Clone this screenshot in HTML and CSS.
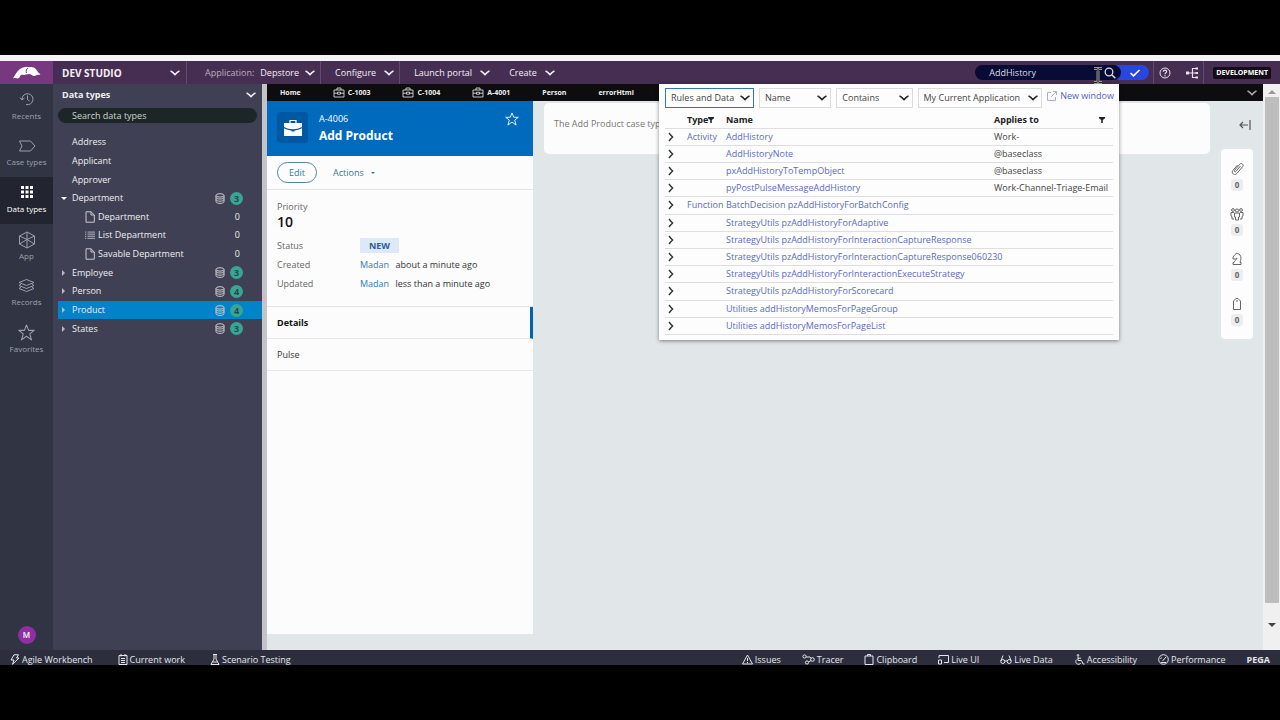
FILE: index.html
```html
<!DOCTYPE html>
<html lang="en">
<head>
    <meta charset="UTF-8">
    <meta name="viewport" content="width=device-width, initial-scale=1.0">
    <title>Dev Studio - Add Product</title>
    <link rel="stylesheet" href="styles.css">
</head>
<body>
    <!-- shared icons -->
    <svg class="sprite" aria-hidden="true">
        <symbol id="chevron" viewBox="0 0 10 6"><path d="M1 1.2Q3 2.6 5 4.6Q7 2.6 9 1.2" fill="none" stroke="currentColor" stroke-width="1.5" stroke-linecap="round"/></symbol>
        <symbol id="expand" viewBox="0 0 6 10"><path d="M1 1Q2.5 3 4.6 5Q2.5 7 1 9" fill="none" stroke="currentColor" stroke-width="1.4"/></symbol>
        <symbol id="case" viewBox="0 0 12 11"><path d="M1 3h10v7H1zM4 3V1h4v2M1 6.2h3.5M7.5 6.2H11M4.5 5.2h3v2h-3z" fill="none" stroke="currentColor" stroke-width=".8"/></symbol>
        <symbol id="db" viewBox="0 0 10 11"><path d="M1 2.4v6.2C1 9.6 2.6 10.4 5 10.4S9 9.6 9 8.6V2.4M1 4.4C1 5.4 2.6 6 5 6s4-.6 4-1.6M1 6.5C1 7.5 2.6 8.2 5 8.2s4-.7 4-1.7" fill="none" stroke="currentColor"/><ellipse cx="5" cy="2.4" rx="4" ry="1.7" fill="none" stroke="currentColor"/></symbol>
        <symbol id="doc" viewBox="0 0 10 12"><path d="M1 .8h5L9.3 4v7.2H1zM6 .8V4h3.3" fill="none" stroke="currentColor"/></symbol>
        <symbol id="list" viewBox="0 0 12 10"><path d="M0 1.5h1.5M3 1.5h9M0 4h1.5M3 4h9M0 6.5h1.5M3 6.5h9M0 9h1.5M3 9h9" stroke="currentColor"/></symbol>
        <symbol id="star" viewBox="0 0 16 16"><path d="M8 1l2 5h5.2l-4.1 3.3L12.7 15 8 11.5 3.3 15l1.6-5.7L.8 6H6z" fill="none" stroke="currentColor" stroke-linejoin="round"/></symbol>
        <symbol id="filter" viewBox="0 0 6 6"><path d="M0 0h6v1.2L3.8 3v3H2.2V3L0 1.2z" fill="currentColor"/></symbol>
    </svg>

    <div class="screen">
        <header class="topbar">
            <a class="logo" href="#" aria-label="Pega">
                <svg width="28" height="13" viewBox="0 0 28 13"><path d="M0 12.5C2 9 5 3 10 1.5c3-1 5-.8 6.5-.2 2-.9 5 0 6.5 2 1.5 2 2.5 4 4.5 5-1.5 1-3 .2-4.2 1-1.5 1-3.3.8-4.5-.3-1.8-1.500-4-1-5.800-.4-2.500.8-3.500-.3-5 .5C6.500 10 7 12 5.500 12.300 4 12.700 3 11.500 0 12.500z" fill="#fff"/><path d="M15 2c-2 1.200-2 3-1.500 5" fill="none" stroke="#77387f"/></svg>
            </a>
            <button class="studio">DEV STUDIO <svg class="chev"><use href="#chevron"/></svg></button>
            <nav class="menus">
                <button class="menu app"><span class="dim">Application:</span> Depstore <svg class="chev"><use href="#chevron"/></svg></button>
                <button class="menu configure">Configure <svg class="chev"><use href="#chevron"/></svg></button>
                <button class="menu">Launch portal <svg class="chev"><use href="#chevron"/></svg></button>
                <button class="menu">Create <svg class="chev"><use href="#chevron"/></svg></button>
            </nav>
            <div class="tools">
                <div class="search">
                    <input type="text" value="AddHistory" aria-label="Search rules">
                    <button class="search-btn" aria-label="Search"><svg width="12" height="12" viewBox="0 0 12 12"><circle cx="5" cy="5" r="3.8" fill="none" stroke="#ddd" stroke-width="1.3"/><path d="M8 8l3.3 3.3" stroke="#ddd" stroke-width="1.5"/></svg></button>
                </div>
                <button class="confirm" aria-label="Check"><svg width="12" height="8" viewBox="0 0 12 8"><path d="M1.5 4l3 2.8L10.5 1" fill="none" stroke="#fff" stroke-width="1.6"/></svg></button>
                <button class="tool" aria-label="Help"><svg width="12" height="12" viewBox="0 0 12 12" fill="none" stroke="#e8e0ea"><circle cx="6" cy="6" r="5"/><path d="M4.3 4.8C4.3 2.6 7.7 2.7 7.6 4.7 7.5 5.8 6 5.7 6 7.2M6 8.2v1.2" stroke-width="1.2"/></svg></button>
                <button class="tool tree" aria-label="Live structure"><svg width="12" height="12" viewBox="0 0 12 12" fill="none" stroke="#e8e0ea" stroke-width="1.2"><path d="M3 6h8M10 1.5H6.5v9H10"/><path d="M0 4.5h3v3H0zM9.5.5H12v2H9.5zM9.5 5H12v2H9.5zM9.5 9.5H12v2H9.5z" fill="#e8e0ea" stroke="none"/></svg></button>
                <span class="env">DEVELOPMENT</span>
            </div>
            <svg class="cursor" width="10" height="17" viewBox="0 0 10 17"><path d="M1 1.5h3l1 1 1-1h3M5 2.5v12M1 15.5h3l1-1 1 1h3" fill="none" stroke="#999" stroke-width="3"/><path d="M1 1.5h3l1 1 1-1h3M5 2.5v12M1 15.5h3l1-1 1 1h3" fill="none" stroke="#222"/></svg>

            <section class="results">
                <div class="filters">
                    <span class="pick rules focus"><select aria-label="Scope"><option>Rules and Data</option></select><svg class="chev"><use href="#chevron"/></svg></span>
                    <span class="pick name"><select aria-label="Field"><option>Name</option></select><svg class="chev"><use href="#chevron"/></svg></span>
                    <span class="pick match"><select aria-label="Match"><option>Contains</option></select><svg class="chev"><use href="#chevron"/></svg></span>
                    <span class="pick stack"><select aria-label="Application"><option>My Current Application</option></select><svg class="chev"><use href="#chevron"/></svg></span>
                    <a class="newwin" href="#"><svg width="10" height="10" viewBox="0 0 10 10" fill="none" stroke="#a9b0d8"><path d="M4 1.5H.5v8h8V6M6 .5h3.5V4M9.5.5L4 6"/></svg>New window</a>
                </div>
                <table>
                    <colgroup><col class="c-exp"><col class="c-type"><col class="c-name"><col></colgroup>
                    <thead>
                        <tr><th></th><th>Type<svg class="flt"><use href="#filter"/></svg></th><th>Name</th><th class="applies">Applies to <svg class="flt"><use href="#filter"/></svg></th></tr>
                    </thead>
                    <tbody>
                        <tr><td><svg class="exp"><use href="#expand"/></svg></td><td><a href="#">Activity</a></td><td><a href="#">AddHistory</a></td><td>Work-</td></tr>
                        <tr><td><svg class="exp"><use href="#expand"/></svg></td><td></td><td><a href="#">AddHistoryNote</a></td><td>@baseclass</td></tr>
                        <tr><td><svg class="exp"><use href="#expand"/></svg></td><td></td><td><a href="#">pxAddHistoryToTempObject</a></td><td>@baseclass</td></tr>
                        <tr><td><svg class="exp"><use href="#expand"/></svg></td><td></td><td><a href="#">pyPostPulseMessageAddHistory</a></td><td>Work-Channel-Triage-Email</td></tr>
                        <tr><td><svg class="exp"><use href="#expand"/></svg></td><td><a href="#">Function</a></td><td><a href="#">BatchDecision pzAddHistoryForBatchConfig</a></td><td></td></tr>
                        <tr><td><svg class="exp"><use href="#expand"/></svg></td><td></td><td><a href="#">StrategyUtils pzAddHistoryForAdaptive</a></td><td></td></tr>
                        <tr><td><svg class="exp"><use href="#expand"/></svg></td><td></td><td><a href="#">StrategyUtils pzAddHistoryForInteractionCaptureResponse</a></td><td></td></tr>
                        <tr><td><svg class="exp"><use href="#expand"/></svg></td><td></td><td><a href="#">StrategyUtils pzAddHistoryForInteractionCaptureResponse060230</a></td><td></td></tr>
                        <tr><td><svg class="exp"><use href="#expand"/></svg></td><td></td><td><a href="#">StrategyUtils pzAddHistoryForInteractionExecuteStrategy</a></td><td></td></tr>
                        <tr><td><svg class="exp"><use href="#expand"/></svg></td><td></td><td><a href="#">StrategyUtils pzAddHistoryForScorecard</a></td><td></td></tr>
                        <tr><td><svg class="exp"><use href="#expand"/></svg></td><td></td><td><a href="#">Utilities addHistoryMemosForPageGroup</a></td><td></td></tr>
                        <tr><td><svg class="exp"><use href="#expand"/></svg></td><td></td><td><a href="#">Utilities addHistoryMemosForPageList</a></td><td></td></tr>
                    </tbody>
                </table>
            </section>
        </header>

        <div class="body">
            <nav class="rail">
                <div class="rail-items">
                    <a href="#"><svg width="16" height="16" viewBox="0 0 16 16" fill="none" stroke="currentColor"><path d="M3 8a5.5 5.5 0 1 1 4 5.5M1 6.5L3 9l2.5-2M8.5 4.5v4l2 1.5"/></svg>Recents</a>
                    <a href="#"><svg width="18" height="16" viewBox="0 0 18 16" fill="none" stroke="currentColor"><path d="M1.5 3h11L17 8l-4.5 5h-11L4 8z"/></svg>Case types</a>
                    <a class="on" href="#"><svg width="16" height="16" viewBox="0 0 16 16" fill="currentColor"><path d="M2 2h3v3H2zM6.5 2h3v3h-3zM11 2h3v3h-3zM2 6.5h3v3H2zM6.5 6.5h3v3h-3zM11 6.5h3v3h-3zM2 11h3v3H2zM6.5 11h3v3h-3zM11 11h3v3h-3z"/></svg>Data types</a>
                    <a href="#"><svg width="18" height="18" viewBox="0 0 18 18" fill="none" stroke="currentColor"><path d="M9 1l7.5 4v8L9 17l-7.5-4V5zM9 1v7.5M1.5 5L9 8.5 16.5 5M9 8.5L1.5 13M9 8.5l7.5 4.5M9 8.5V17"/></svg>App</a>
                    <a href="#"><svg width="17" height="15" viewBox="0 0 17 15" fill="none" stroke="currentColor"><path d="M8.5 1.5L16 4.5l-7.5 3L1 4.5zM3 6L1 7.5l7.5 3 7.5-3L14 6M3 9l-2 1.5 7.5 3 7.5-3L14 9"/></svg>Records</a>
                    <a href="#"><svg width="17" height="17"><use href="#star"/></svg>Favorites</a>
                </div>
                <span class="avatar">M</span>
            </nav>

            <aside class="explorer">
                <h2>Data types <svg class="chev"><use href="#chevron"/></svg></h2>
                <input class="find" type="text" placeholder="Search data types" aria-label="Search data types">
                <ul>
                    <li><a href="#">Address</a></li>
                    <li><a href="#">Applicant</a></li>
                    <li><a href="#">Approver</a></li>
                    <li><i class="tri open"></i><a href="#">Department</a><svg class="db"><use href="#db"/></svg><b>3</b></li>
                    <li class="sub"><svg class="doc"><use href="#doc"/></svg><a href="#">Department</a><em>0</em></li>
                    <li class="sub"><svg class="doc"><use href="#list"/></svg><a href="#">List Department</a><em>0</em></li>
                    <li class="sub"><svg class="doc"><use href="#doc"/></svg><a href="#">Savable Department</a><em>0</em></li>
                    <li><i class="tri"></i><a href="#">Employee</a><svg class="db"><use href="#db"/></svg><b>3</b></li>
                    <li><i class="tri"></i><a href="#">Person</a><svg class="db"><use href="#db"/></svg><b>4</b></li>
                    <li class="on"><i class="tri"></i><a href="#">Product</a><svg class="db"><use href="#db"/></svg><b>4</b></li>
                    <li><i class="tri"></i><a href="#">States</a><svg class="db"><use href="#db"/></svg><b>3</b></li>
                </ul>
            </aside>

            <div class="splitter"></div>

            <div class="work">
                <nav class="tabs">
                    <a href="#">Home</a>
                    <a href="#"><svg width="12" height="11"><use href="#case"/></svg>C-1003</a>
                    <a href="#"><svg width="12" height="11"><use href="#case"/></svg>C-1004</a>
                    <a href="#"><svg width="12" height="11"><use href="#case"/></svg>A-4001</a>
                    <a href="#">Person</a>
                    <a href="#">errorHtml</a>
                    <svg class="chev more"><use href="#chevron"/></svg>
                </nav>
                <div class="content">
                    <section class="case">
                        <div class="case-head">
                            <span class="case-icon"><svg width="18" height="17" viewBox="0 0 18 17"><path d="M6 4V1.5h6V4" fill="none" stroke="#fff" stroke-width="1.2"/><path d="M0 4h18v4c-6 3-12 3-18 0zM0 9.2c3 1.5 5 2 7.5 2.2v1h3v-1c2.5-.2 4.5-.7 7.5-2.2V17H0z" fill="#fff"/></svg></span>
                            <div class="case-title">
                                <span>A-4006</span>
                                <h1>Add Product</h1>
                            </div>
                            <svg class="fav" width="14" height="14"><use href="#star"/></svg>
                        </div>
                        <div class="case-actions">
                            <button class="edit">Edit</button>
                            <button class="actions">Actions <i></i></button>
                        </div>
                        <div class="case-info">
                            <div class="label">Priority</div>
                            <div class="priority">10</div>
                            <dl>
                                <dt>Status</dt><dd><span class="badge">NEW</span></dd>
                                <dt>Created</dt><dd><a href="#">Madan</a> about a minute ago</dd>
                                <dt>Updated</dt><dd><a href="#">Madan</a> less than a minute ago</dd>
                            </dl>
                        </div>
                        <a class="case-tab on" href="#">Details</a>
                        <a class="case-tab" href="#">Pulse</a>
                    </section>
                    <main class="main">
                        <div class="card">The Add Product case type</div>
                    </main>
                    <aside class="utils">
                        <svg class="collapse" width="12" height="12" viewBox="0 0 12 12" fill="none" stroke="#555" stroke-width="1.2"><path d="M11 1v10M9 6H1M4 3L1 6l3 3"/></svg>
                        <div class="util-card">
                            <a href="#"><svg width="13" height="14" viewBox="0 0 13 14" fill="none" stroke="currentColor"><path d="M9.5 4L4.8 9.5c-.8 1-2-.2-1.2-1.2L8.8 2.2c1.6-1.8 4.4.5 2.9 2.4L5.8 11.5c-2.4 2.6-6-.4-3.9-3L6.5 3"/></svg><b>0</b></a>
                            <a href="#"><svg width="14" height="14" viewBox="0 0 14 14" fill="none" stroke="currentColor"><circle cx="3" cy="3" r="1.4"/><circle cx="11" cy="3" r="1.4"/><circle cx="7" cy="3.5" r="1.6"/><path d="M4.5 6h5v4H8.5v3h-3v-3h-1zM3.8 5.5H1v3.5l1 .5V12h2M10.2 5.5H13v3.5l-1 .5V12h-2"/></svg><b>0</b></a>
                            <a href="#"><svg width="12" height="14" viewBox="0 0 12 14" fill="none" stroke="currentColor"><path d="M2 12.5h8v-2H9C10 8 10.5 5 9 3 7.5 1.2 5 1 4 2.5L2 5v2h2.5L6 6c0 2-3 2.5-3 4.5H2z"/></svg><b>0</b></a>
                            <a href="#"><svg width="10" height="14" viewBox="0 0 10 14" fill="none" stroke="currentColor"><path d="M1.5 4L4 1.5h2L8.5 4v8.5h-7zM4 4h2"/></svg><b>0</b></a>
                        </div>
                    </aside>
                    <div class="scroll"><i class="up"></i><span></span><i class="down"></i></div>
                </div>
            </div>
        </div>

        <footer class="devbar">
            <div class="left">
                <a href="#"><svg width="10" height="11" viewBox="0 0 10 11" fill="none" stroke="currentColor"><path d="M4 .8h4.5L6.5 4H9L2.5 10.3 4 6H1z"/></svg>Agile Workbench</a>
                <a href="#"><svg width="10" height="11" viewBox="0 0 10 11" fill="none" stroke="currentColor"><path d="M1 1.5h8v9H1zM3 0v2.5M7 0v2.5M3 4.5h4M3 6.5h4M3 8.5h4"/></svg>Current work</a>
                <a href="#"><svg width="10" height="11" viewBox="0 0 10 11" fill="none" stroke="currentColor"><path d="M3 .5h4M4 .5V5L1 10.5h8L6 5V.5M2.5 8h5"/></svg>Scenario Testing</a>
            </div>
            <div class="right">
                <a href="#"><svg width="11" height="11" viewBox="0 0 11 11" fill="none" stroke="currentColor"><path d="M5.5 1L10.5 10H.5zM5.5 4v3M5.5 8v1.2"/></svg>Issues</a>
                <a href="#"><svg width="13" height="11" viewBox="0 0 13 11" fill="none" stroke="currentColor"><circle cx="2.5" cy="2.5" r="1.6"/><circle cx="5" cy="8.5" r="1.6"/><circle cx="10.5" cy="5.5" r="1.8"/><path d="M4 3h4l1 1.5M6.5 8L9 6.5"/></svg>Tracer</a>
                <a href="#"><svg width="10" height="11" viewBox="0 0 10 11" fill="none" stroke="currentColor"><path d="M1 2h8v8.5H1zM3.5 2V.5h3V2"/></svg>Clipboard</a>
                <a href="#"><svg width="11" height="11" viewBox="0 0 11 11" fill="none" stroke="currentColor"><path d="M1 4V1.5h9.5v7H6M.5 6h3v4h-3z"/></svg>Live UI</a>
                <a href="#"><svg width="12" height="11" viewBox="0 0 12 11" fill="none" stroke="currentColor"><circle cx="2.8" cy="7.5" r="2"/><circle cx="9.2" cy="7.5" r="2"/><path d="M.8 7L3 1.5M11.2 7L9 1.5M4.8 7h2.4"/></svg>Live Data</a>
                <a href="#"><svg width="11" height="11" viewBox="0 0 11 11" fill="none" stroke="currentColor"><circle cx="4" cy="1.3" r=".8"/><path d="M4 2.5V6.5h3.5L9 10h1.5M4 4.2h3M2.8 5.5a2.7 2.7 0 1 0 4 3.5"/></svg>Accessibility</a>
                <a href="#"><svg width="11" height="11" viewBox="0 0 11 11" fill="none" stroke="currentColor"><circle cx="5.5" cy="5.5" r="4.8"/><path d="M4.5 7L8 3M3 8.5h5M2.5 5l1-1.5"/></svg>Performance</a>
                <strong>PEGA</strong>
            </div>
        </footer>
    </div>
</body>
</html>
```

FILE: styles.css
```css
* { box-sizing: border-box; }
body {
    margin: 0;
    height: 100vh;
    padding: 55px 0;
    background: #000;
    font-family: "Open Sans", "Noto Sans", sans-serif;
    font-size: 9px;
    line-height: 12px;
    color: #333;
}
button, input, select { font: inherit; color: inherit; border: 0; background: none; padding: 0; margin: 0; }
a { color: inherit; text-decoration: none; }
svg { flex: none; }
.sprite { position: absolute; width: 0; height: 0; }
.chev { width: 10px; height: 6px; }

.screen {
    height: 100%;
    display: flex;
    flex-direction: column;
    border-top: 6px solid #f5f3f6;
    background: #e1e6e9;
}

/* top bar */
.topbar {
    position: relative;
    z-index: 2;
    flex: none;
    display: flex;
    height: 23px;
    background: #462d52;
    color: #f4f0f6;
}
.logo {
    width: 53px;
    display: flex;
    align-items: center;
    justify-content: center;
    background: #77387f;
}
.studio {
    width: 134px;
    display: flex;
    align-items: center;
    justify-content: space-between;
    padding: 0 6px 0 9px;
    border-right: 1px solid #65486e;
    font-size: 10px;
    font-weight: 700;
}
.menus { display: flex; }
.menu {
    display: flex;
    align-items: center;
    gap: 8px;
    padding: 0 5px 0 14px;
    font-weight: 500;
}
.menu.app { gap: 6px; padding-left: 18px; border-right: 1px solid #65486e; }
.menu.configure { border-right: 1px solid #65486e; }
.dim { color: #b9adbf; font-weight: 400; }
.tools { display: flex; align-items: center; margin-left: auto; padding-right: 9px; }
.search {
    position: relative;
    z-index: 1;
    display: flex;
    align-items: center;
    width: 146px;
    height: 15px;
    padding: 0 5px 0 14px;
    border-radius: 8px;
    background: #070b35;
}
.search input { flex: 1; min-width: 0; color: #dcdce6; outline: 0; }
.search-btn, .tool { display: flex; }
.confirm {
    display: flex;
    align-items: center;
    justify-content: center;
    width: 38px;
    height: 15px;
    margin-left: -10px;
    padding-left: 10px;
    border-radius: 8px;
    background: #2946e0;
}
.tool { height: 23px; align-items: center; padding: 0 9px 0 5px; margin-left: 4px; border-left: 1px solid #65486e; }
.tool.tree { margin: 0; padding: 0 5px 0 6px; border: 0; border-right: 1px solid #65486e; }
.env {
    margin-left: 9px;
    padding: 0 3px;
    border-radius: 2px;
    background: #140c18;
    font-size: 7px;
    font-weight: 700;
    color: #fff;
}
.cursor { position: absolute; right: 177px; top: 6px; z-index: 4; }

/* search results */
.results {
    position: absolute;
    top: 23px;
    right: 161px;
    width: 460px;
    padding: 4px 5px 5px 6px;
    background: #fdfdfd;
    box-shadow: 0 1px 4px rgba(0,0,0,0.45);
    color: #444;
}
.filters { display: flex; gap: 5px; height: 20px; }
.pick { position: relative; border: 1px solid #dcdcdc; }
.pick.focus { border: 1px solid #2f76ba; }
.pick select { appearance: none; width: 100%; height: 100%; padding-left: 5px; outline: 0; }
.pick .chev { position: absolute; right: 3px; top: 6px; color: #222; pointer-events: none; }
.rules { width: 90px; }
.name { width: 73px; }
.match { width: 77px; }
.stack { width: 126px; }
.newwin { display: flex; gap: 3px; height: 16px; align-items: center; white-space: nowrap; color: #5361bd; }
.results table { width: 448px; height: 227px; border-collapse: collapse; table-layout: fixed; }
.c-exp { width: 22px; }
.c-type { width: 39px; }
.c-name { width: 268px; }
.results th, .results td { padding: 0; border-bottom: 1px solid #dedede; text-align: left; white-space: nowrap; line-height: 12px; }
.results th { height: 20px; padding-top: 4px; color: #222; font-weight: 700; }
.results td a { color: #5b6bc0; }
.exp { display: block; width: 6px; height: 10px; margin-left: 3px; color: #333; }
.flt { width: 6px; height: 6px; }
.applies .flt { float: right; margin: 3px 8px 0 0; }

.body { flex: 1; min-height: 0; display: flex; }

/* left rail */
.rail {
    width: 53px;
    display: flex;
    flex-direction: column;
    align-items: stretch;
    justify-content: space-between;
    background: #303443;
    color: #9ea1ab;
    font-size: 8px;
}
.rail-items { display: grid; grid-auto-rows: 1fr; min-height: 280px; }
.rail a { display: flex; flex-direction: column; align-items: center; justify-content: space-between; padding: 7px 0 9px; }
.rail a.on { background: #222530; color: #fff; }
.avatar {
    align-self: center;
    width: 18px;
    height: 18px;
    margin-bottom: 6px;
    border-radius: 50%;
    background: #8f2fa3;
    color: #fff;
    font-weight: 600;
    line-height: 18px;
    text-align: center;
}

/* explorer */
.explorer { width: 209px; background: #3f4053; color: #eeeef2; }
.explorer h2 {
    display: flex;
    align-items: center;
    justify-content: space-between;
    height: 22px;
    margin: 0;
    padding: 0 6px 0 9px;
    font-size: 9px;
    font-weight: 700;
}
.find {
    display: block;
    width: 199px;
    height: 15px;
    margin: 2px 5px 10px;
    padding-left: 14px;
    border-radius: 8px;
    background: #1c2626;
}
.find::placeholder { color: #cfd2d2; opacity: 1; }
.explorer ul { display: grid; grid-auto-rows: 1fr; min-height: 205px; margin: 0; padding: 0 0 0 5px; list-style: none; font-weight: 500; }
.explorer li { position: relative; display: flex; align-items: center; padding: 0 19px 0 14px; }
.explorer li a { flex: 1; }
.explorer li.on { background: #0083cb; }
.explorer li.sub { padding: 0 22px 0 27px; }
.explorer li em { font-style: normal; }
.explorer li b {
    width: 13px;
    height: 13px;
    margin-left: 5px;
    border-radius: 50%;
    background: #3aa595;
    color: #1f4a52;
    line-height: 13px;
    text-align: center;
}
.db { width: 10px; height: 11px; color: #c9c9d2; }
.doc { width: 10px; height: 12px; margin-right: 3px; color: #c9c9d2; }
.tri { position: absolute; left: 4px; border: 3px solid transparent; border-left-color: #b9bac4; border-right: 0; }
.tri.open { left: 3px; border: 3px solid transparent; border-top-color: #fff; border-bottom: 0; }
.splitter { width: 5px; background: #c3c3c8; }

/* work area */
.work { flex: 1; min-width: 0; display: flex; flex-direction: column; }
.tabs {
    display: flex;
    align-items: center;
    height: 17px;
    margin-right: 17px;
    padding: 0 6px 0 13px;
    gap: 32px;
    background: #0d0d0f;
    color: #f0f0f0;
    font-size: 7px;
    font-weight: 700;
}
.tabs a { display: flex; align-items: center; gap: 3px; }
.tabs .more { margin-left: auto; color: #aaa; }
.content { flex: 1; min-height: 0; display: flex; }
.case { width: 266px; margin-bottom: 16px; background: #fcfcfc; }
.case-head { display: flex; height: 55px; padding: 11px 14px 0 10px; background: #006abd; color: #fff; }
.case-icon {
    display: flex;
    align-items: center;
    justify-content: center;
    width: 31px;
    height: 31px;
    border-radius: 3px;
    background: #0058a3;
}
.case-title { flex: 1; padding: 1px 0 0 11px; }
.case-title span { display: block; }
.case-title h1 { margin: 2px 0 0; font-size: 12px; line-height: 17px; }
.case-actions { display: flex; align-items: center; gap: 16px; height: 34px; padding: 0 10px; border-bottom: 1px solid #e4e4e6; color: #35779f; }
.edit { width: 40px; height: 21px; border: 1px solid #4d87a3; border-radius: 11px; }
.actions { display: flex; align-items: center; gap: 7px; }
.actions i { border: 2px solid transparent; border-top-color: #35779f; border-bottom: 0; }
.case-info { padding: 11px 10px 13px; border-bottom: 1px solid #e4e4e6; }
.label, .case-info dt { color: #666; }
.priority { margin: 0 0 5px; font-size: 14px; font-weight: 600; line-height: 18px; color: #111; }
.case-info dl { display: grid; grid-template-columns: 83px 1fr; margin: 0; line-height: 19px; }
.case-info dd { margin: 0; }
.case-info dd a { margin-right: 4px; color: #337ab7; }
.badge { padding: 1px 9px; background: #dde9f8; color: #2b5ba0; font-weight: 700; }
.case-tab { display: block; height: 32px; padding-left: 10px; border-bottom: 1px solid #e8e8ea; line-height: 31px; }
.case-tab.on { border-right: 3px solid #0064b4; font-weight: 700; color: #111; }

.main { flex: 1; min-width: 0; padding: 2px 0 0 11px; }
.card { height: 51px; padding: 15px 10px; border-radius: 5px; background: #fcfcfc; color: #777; }
.utils { width: 53px; padding: 18px 0 0 11px; }
.collapse { display: block; margin-left: 18px; }
.util-card {
    display: flex;
    flex-direction: column;
    gap: 16px;
    width: 32px;
    margin-top: 18px;
    padding: 13px 0;
    border-radius: 4px;
    background: #fdfdfd;
    color: #666;
}
.util-card a { display: flex; flex-direction: column; align-items: center; gap: 3px; }
.util-card b { width: 12px; height: 12px; border-radius: 3px; background: #ebedee; font-size: 8px; text-align: center; }
.scroll { display: flex; flex-direction: column; width: 17px; margin-top: -17px; background: #f0f0f0; }
.scroll span { flex: 1; width: 14px; margin: 0 2px; background: #bdbdbd; }
.scroll i { margin-left: 5px; border: 4px solid transparent; width: 0; }
.scroll .up { margin-top: 6px; margin-bottom: 3px; border-top: 0; border-bottom-color: #999; }
.scroll .down { margin-top: 20px; margin-bottom: 19px; border-top-color: #444; }

/* bottom developer bar */
.devbar {
    flex: none;
    display: flex;
    align-items: center;
    justify-content: space-between;
    height: 15px;
    padding: 4px 10px 0;
    overflow: hidden;
    background: #2c2e3d;
    color: #e6e6ea;
}
.left, .right { display: flex; gap: 21px; }
.left { gap: 25px; }
.devbar a { display: flex; align-items: center; gap: 2px; }
```
